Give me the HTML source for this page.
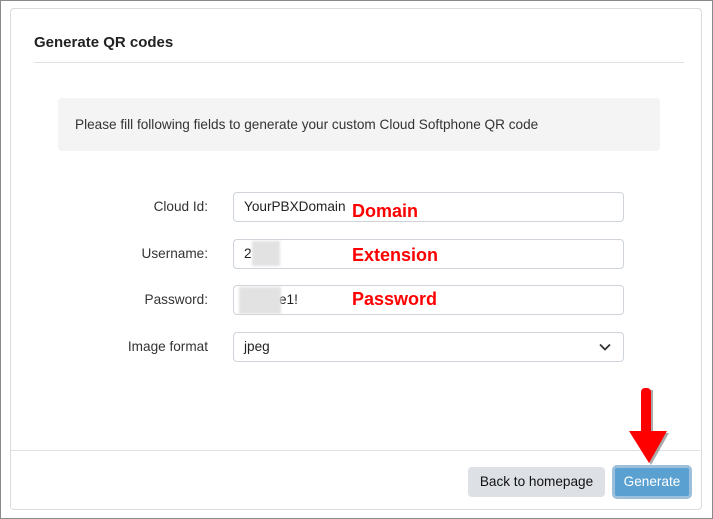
<!DOCTYPE html>
<html><head><style>
body{margin:0;width:713px;height:519px;background:#fff;font-family:"Liberation Sans",sans-serif;position:relative;overflow:hidden}
.frame{position:absolute;left:0;top:0;width:711px;height:517px;border:1px solid #8a8a8a}
.card{position:absolute;left:10px;top:8px;width:690px;height:500px;border:1px solid #d8dcdf;border-radius:4px;background:#fff}
.h{position:absolute;left:34px;top:34px;font-size:15px;font-weight:bold;color:#222}
.hr{position:absolute;left:34px;top:62px;width:650px;height:1px;background:#dee2e6}
.note{position:absolute;left:58px;top:98px;width:602px;height:53px;background:#f4f4f4;border-radius:4px;font-size:13.6px;color:#333;line-height:53px;padding-left:17px;box-sizing:border-box}
.lab{position:absolute;right:505px;font-size:13.6px;color:#333}
.in{position:absolute;left:233px;width:391px;height:30px;border:1px solid #ced4da;border-radius:4px;box-sizing:border-box;font-size:13.6px;color:#222;padding-left:10px;line-height:28px}
.red{position:absolute;left:352px;font-size:18px;font-weight:bold;color:#f00}
.blur{position:absolute;background:#e2e2e2;filter:blur(1px)}
.foot{position:absolute;left:11px;top:450px;width:689px;height:57px;border-top:1px solid #dee2e6;background:#fff}
.b1{position:absolute;left:468px;top:467px;width:137px;height:30px;background:#dde0e5;border-radius:4px;font-size:13.6px;color:#111;text-align:center;line-height:30px}
.b2{position:absolute;left:612px;top:465px;width:80px;height:34px;background:#5aa0d0;border:3px solid #9cc0dc;box-sizing:border-box;border-radius:5px;font-size:13.6px;color:#fff;text-align:center;line-height:28px}
</style></head><body>
<div class="frame"></div>
<div class="card"></div>
<div class="h">Generate QR codes</div>
<div class="hr"></div>
<div class="note">Please fill following fields to generate your custom Cloud Softphone QR code</div>
<div class="lab" style="top:199px">Cloud Id:</div>
<div class="lab" style="top:246px">Username:</div>
<div class="lab" style="top:292px">Password:</div>
<div class="lab" style="top:339px">Image format</div>
<div class="in" style="top:192px">YourPBXDomain</div>
<div class="in" style="top:239px">2</div>
<div class="in" style="top:285px"><span style="padding-left:35px">e1!</span></div>
<div class="in" style="top:332px">jpeg<svg style="position:absolute;right:12px;top:10px" width="12" height="8" viewBox="0 0 12 8"><path d="M1 1.5L6 6.5L11 1.5" fill="none" stroke="#333" stroke-width="1.8"/></svg></div>
<div class="blur" style="left:252px;top:241px;width:28px;height:25px"></div>
<div class="blur" style="left:239px;top:287px;width:42px;height:27px"></div>
<div class="red" style="top:201px">Domain</div>
<div class="red" style="top:245px">Extension</div>
<div class="red" style="top:289px">Password</div>
<div class="foot"></div>
<div class="b1">Back to homepage</div>
<div class="b2">Generate</div>
<svg style="position:absolute;left:625px;top:385px" width="50" height="85" viewBox="0 0 50 85">
<g transform="translate(2,2)" fill="#555" opacity=".5"><rect x="16" y="3" width="10" height="50"/><path d="M4 46L42 46L24 78Z"/></g>
<rect x="16" y="3" width="10" height="50" rx="4" fill="#f00"/>
<path d="M4 46L42 46L24 78Z" fill="#f00"/>
</svg>
</body></html>
